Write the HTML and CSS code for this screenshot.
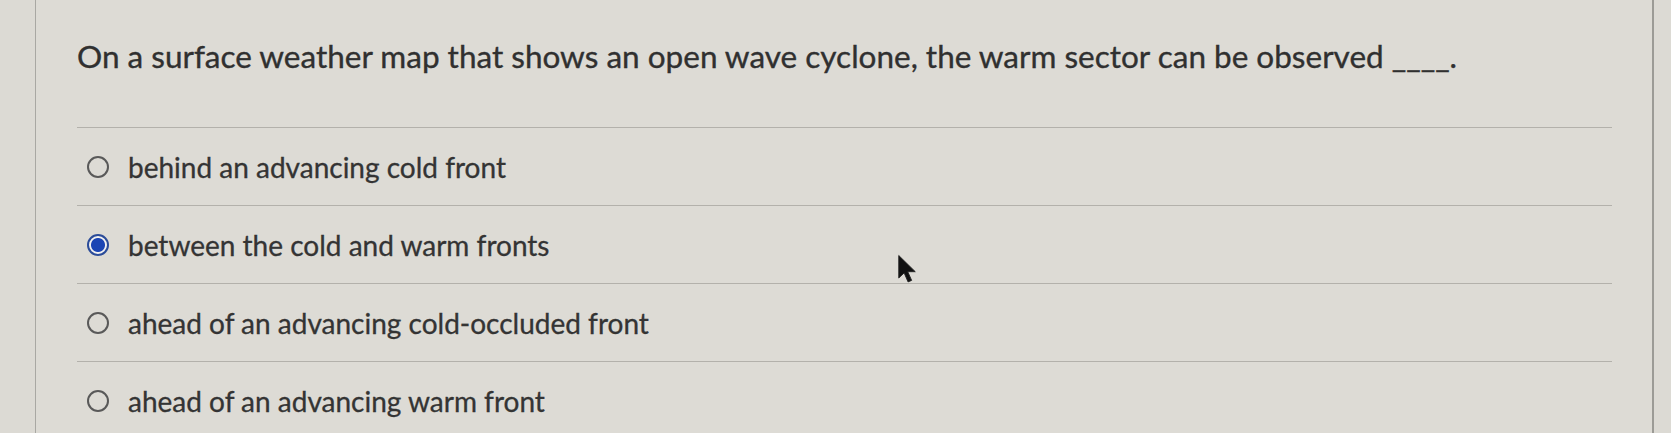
FILE: index.html
```html
<!DOCTYPE html>
<html lang="en">
<head>
<meta charset="utf-8">
<title>Question</title>
<link rel="stylesheet" href="styles.css">
</head>
<body>
<div class="frame">
  <div class="content">
    <p class="question">On a surface weather map that shows an open wave cyclone, the warm sector can be observed <span class="blank">____</span>.</p>
    <ul class="options">
      <li class="option"><span class="radio"></span><span class="label">behind an advancing cold front</span></li>
      <li class="option"><span class="radio checked"></span><span class="label">between the cold and warm fronts</span></li>
      <li class="option"><span class="radio"></span><span class="label">ahead of an advancing cold-occluded front</span></li>
      <li class="option"><span class="radio"></span><span class="label">ahead of an advancing warm front</span></li>
    </ul>
  </div>
  <svg class="cursor" width="20" height="30" viewBox="0 0 13 20" aria-hidden="true">
    <path d="M1 1 L1 16 L4.6 12.6 L7.2 18.6 L9.6 17.6 L7 11.8 L12 11.8 Z" fill="#111" stroke="#222" stroke-width="0.6" stroke-linejoin="round"/>
  </svg>
</div>
</body>
</html>
```

FILE: styles.css
```css
html, body {
  margin: 0;
  padding: 0;
  background: #dcdad4;
}

body {
  font-family: Lato, "Noto Sans", sans-serif;
  color: #353535;
  height: 433px;
  overflow: hidden;
}

.frame {
  position: relative;
  margin-left: 35px;
  width: 1616px;
  height: 433px;
  border-left: 1px solid #a9a8a3;
  border-right: 2px solid #9c9b96;
  background: #dddbd5;
}

.content {
  padding: 38px 40px 0 41px;
}

.question {
  margin: 0 0 53px 0;
  font-size: 31.5px;
  line-height: 36px;
  color: #303030;
  -webkit-text-stroke: 0.35px #303030;
}

.options {
  list-style: none;
  margin: 0;
  padding: 0;
}

.option {
  height: 78px;
  border-top: 1px solid #b3b1ab;
  display: flex;
  align-items: center;
  box-sizing: border-box;
}

.radio {
  width: 18px;
  height: 18px;
  border: 2px solid #595959;
  border-radius: 50%;
  margin-left: 10px;
  margin-right: 19px;
  flex: none;
  box-sizing: content-box;
}

.radio.checked {
  border: 2px solid #2b4c99;
  background: radial-gradient(circle, #1b45b4 0 6.5px, #f1f1f1 7.5px 100%);
}

.label {
  font-size: 28px;
  line-height: 32px;
  color: #343434;
  -webkit-text-stroke: 0.3px #343434;
}

.cursor {
  position: absolute;
  left: 861px;
  top: 254px;
}
```
